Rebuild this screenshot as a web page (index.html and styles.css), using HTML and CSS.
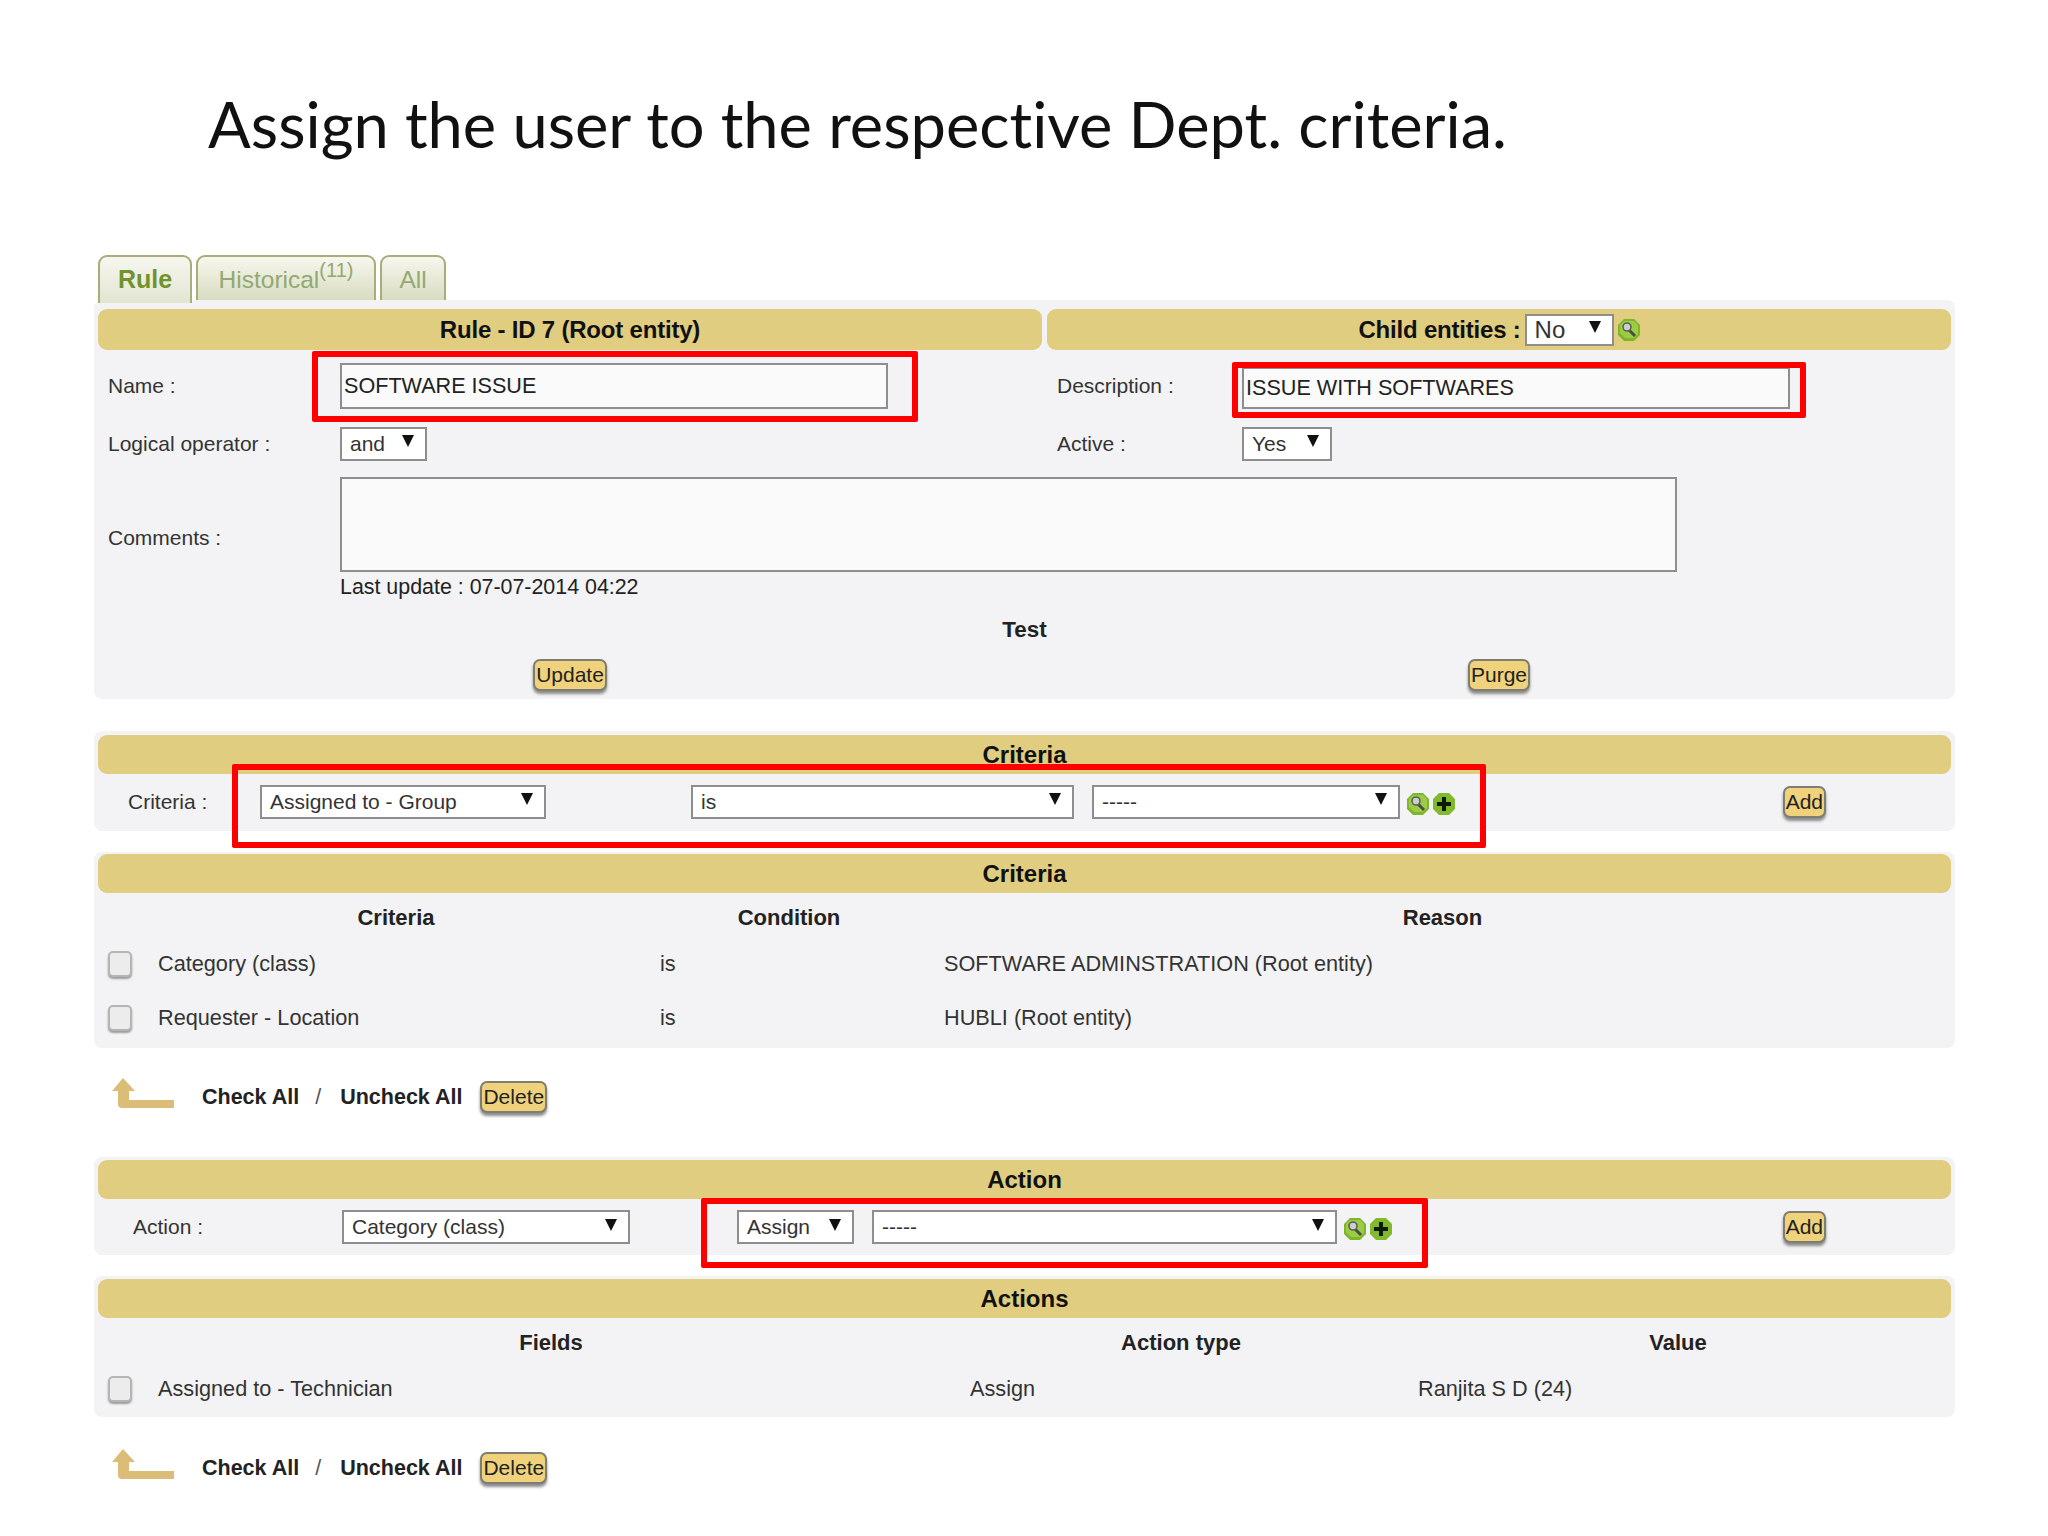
FILE: index.html
```html
<!DOCTYPE html>
<html lang="en">
<head>
    <meta charset="UTF-8">
    <title>Assign the user to the respective Dept. criteria.</title>
    <link rel="stylesheet" href="styles.css">
</head>
<body>
    <svg class="defs" width="0" height="0">
        <symbol id="icon-search" viewBox="0 0 22 24">
            <path d="M6 1h10l6 6v10l-6 6H6l-6-6V7z" fill="#7fb52a"/>
            <path d="M6 3h10l4 4v9l-4 4H7l-5-5V7z" fill="#9ccb45"/>
            <path d="M11 12l6 6" stroke="#4a4f44" stroke-width="3"/>
            <circle cx="9" cy="9" r="4" fill="#c9cfc9" stroke="#5b6058" stroke-width="1.6"/>
        </symbol>
        <symbol id="icon-plus" viewBox="0 0 22 24">
            <path d="M6 1h10l6 6v10l-6 6H6l-6-6V7z" fill="#82b82c"/>
            <path d="M9 5h4v5h5v4h-5v5H9v-5H4v-4h5z" fill="#0d1a08"/>
        </symbol>
        <symbol id="icon-back" viewBox="0 0 62 30">
            <path d="M11 0l12 13h-6v9h45v8H10q-4 0-4-4V13H0z" fill="#dcbd78"/>
        </symbol>
    </svg>

    <div class="slide">
        <h1 class="title">Assign the user to the respective Dept. criteria.</h1>

        <div class="tabs">
            <a class="tab active">Rule</a>
            <a class="tab wide">Historical<sup>(11)</sup></a>
            <a class="tab short">All</a>
        </div>

        <section class="panel rule-panel">
            <div class="split">
                <div class="head">Rule - ID 7 (Root entity)</div>
                <div class="head head-child">
                    <span>Child entities :</span>
                    <div class="select sel-child"><span>No</span></div>
                    <svg class="icon"><use href="#icon-search"/></svg>
                </div>
            </div>
            <div class="form-row first">
                <div class="cell">
                    <label class="label">Name :</label>
                    <input class="text-input" type="text" value="SOFTWARE ISSUE">
                </div>
                <div class="cell cell-right">
                    <label class="label">Description :</label>
                    <input class="text-input short-input" type="text" value="ISSUE WITH SOFTWARES">
                </div>
            </div>
            <div class="form-row second">
                <div class="cell">
                    <label class="label">Logical operator :</label>
                    <div class="select sel-and"><span>and</span></div>
                </div>
                <div class="cell cell-right">
                    <label class="label">Active :</label>
                    <div class="select sel-yes"><span>Yes</span></div>
                </div>
            </div>
            <div class="form-row third">
                <label class="label">Comments :</label>
                <textarea class="comments"></textarea>
            </div>
            <div class="last-update">Last update : 07-07-2014 04:22</div>
            <div class="test">Test</div>
            <div class="split actions-row">
                <div class="centered"><button class="btn">Update</button></div>
                <div class="centered"><button class="btn">Purge</button></div>
            </div>
        </section>

        <section class="panel add-panel criteria-add">
            <div class="head">Criteria</div>
            <div class="add-row">
                <label class="label add-label-criteria">Criteria :</label>
                <div class="select sel-group"><span>Assigned to - Group</span></div>
                <div class="select sel-is"><span>is</span></div>
                <div class="select sel-value"><span>-----</span></div>
                <svg class="icon"><use href="#icon-search"/></svg>
                <svg class="icon"><use href="#icon-plus"/></svg>
                <button class="btn btn-add">Add</button>
            </div>
        </section>

        <section class="panel list-panel criteria-list">
            <div class="head">Criteria</div>
            <div class="table table-criteria">
                <div></div><div class="th">Criteria</div><div class="th">Condition</div><div class="th">Reason</div>
                <div class="td"><input class="check" type="checkbox"></div><div class="td">Category (class)</div><div class="td pad">is</div><div class="td">SOFTWARE ADMINSTRATION (Root entity)</div>
                <div class="td"><input class="check" type="checkbox"></div><div class="td">Requester - Location</div><div class="td pad">is</div><div class="td">HUBLI (Root entity)</div>
            </div>
        </section>

        <div class="bulk">
            <svg class="back"><use href="#icon-back"/></svg>
            <a class="bulk-link">Check All</a>
            <span class="slash">/</span>
            <a class="bulk-link">Uncheck All</a>
            <button class="btn">Delete</button>
        </div>

        <section class="panel add-panel action-add">
            <div class="head">Action</div>
            <div class="add-row">
                <label class="label add-label-action">Action :</label>
                <div class="select sel-category"><span>Category (class)</span></div>
                <div class="select sel-assign"><span>Assign</span></div>
                <div class="select sel-dash"><span>-----</span></div>
                <svg class="icon"><use href="#icon-search"/></svg>
                <svg class="icon"><use href="#icon-plus"/></svg>
                <button class="btn btn-add">Add</button>
            </div>
        </section>

        <section class="panel list-panel actions-list">
            <div class="head">Actions</div>
            <div class="table table-actions">
                <div></div><div class="th">Fields</div><div class="th">Action type</div><div class="th">Value</div>
                <div class="td"><input class="check" type="checkbox"></div><div class="td">Assigned to - Technician</div><div class="td pad">Assign</div><div class="td">Ranjita S D (24)</div>
            </div>
        </section>

        <div class="bulk">
            <svg class="back"><use href="#icon-back"/></svg>
            <a class="bulk-link">Check All</a>
            <span class="slash">/</span>
            <a class="bulk-link">Uncheck All</a>
            <button class="btn">Delete</button>
        </div>

        <!-- red callouts drawn over the screenshot -->
        <div class="mark mark-name"></div>
        <div class="mark mark-desc"></div>
        <div class="mark mark-criteria"></div>
        <div class="mark mark-action"></div>
    </div>
</body>
</html>
```

FILE: styles.css
```css
body {
    margin: 0;
    background: #fff;
    color: #222;
    font-family: "Liberation Sans", Arial, sans-serif;
    font-size: 21px;
}
.defs {
    position: absolute;
}
.slide {
    position: relative;
    width: 2048px;
    height: 1536px;
    padding: 0 93px 0 94px;
    box-sizing: border-box;
    overflow: hidden;
}
.title {
    height: 255px;
    margin: 0;
    padding: 86px 0 0 114px;
    box-sizing: border-box;
    font-family: Lato, "Noto Sans", sans-serif;
    font-size: 63.2px;
    font-weight: 400;
    font-variant-ligatures: none;
    line-height: 76px;
    color: #111;
}

/* tabs */
.tabs {
    display: flex;
    gap: 4px;
    height: 48px;
    margin: 0 0 -3px 4px;
    position: relative;
    z-index: 1;
}
.tab {
    width: 94px;
    height: 45px;
    box-sizing: border-box;
    border: 2px solid #a9ad7c;
    border-bottom: none;
    border-radius: 9px 9px 0 0;
    background: linear-gradient(#f7f7ee, #d8dcc0);
    color: #93a873;
    font-size: 24.5px;
    line-height: 45px;
    text-align: center;
}
.tab.active {
    height: 48px;
    background: linear-gradient(#f7f7ee, #e2e5d2);
    color: #71932c;
    font-weight: bold;
    font-size: 25px;
}
.tab.wide {
    width: 180px;
}
.tab.short {
    width: 66px;
}
.tab sup {
    font-size: 20px;
    line-height: 0;
    position: relative;
    top: -2px;
}

/* panels */
.panel {
    background: #f3f3f5;
    border-radius: 8px;
    padding: 0 4px;
}
.head {
    height: 39px;
    background: #e0cd80;
    border-radius: 9px;
    color: #111;
    font-size: 24px;
    font-weight: bold;
    line-height: 39px;
    text-align: center;
}
.split {
    display: grid;
    grid-template-columns: 944px 904px;
    gap: 5px;
}
.rule-panel {
    padding-top: 9px;
    height: 399px;
    box-sizing: border-box;
}
.rule-panel .head {
    height: 41px;
    line-height: 41px;
    letter-spacing: -0.2px;
}
.head-child {
    display: flex;
    justify-content: center;
    align-items: center;
    gap: 4px;
}
.head-child .select {
    font-weight: normal;
    letter-spacing: 0;
}
.label {
    color: #333;
}
.form-row {
    display: flex;
    align-items: center;
    padding-left: 10px;
}
.form-row .label {
    width: 232px;
    flex: none;
}
.cell {
    display: flex;
    align-items: center;
    flex: none;
    width: 949px;
}
.cell-right {
    width: auto;
}
.cell-right .label {
    width: 185px;
}
.first {
    margin-top: 13px;
    height: 46px;
}
.second {
    margin-top: 18px;
    height: 33px;
}
.third {
    margin-top: 17px;
}
.third .label {
    padding-top: 26px;
}
.text-input {
    width: 548px;
    height: 46px;
    box-sizing: border-box;
    border: 2px solid #8e8e8e;
    background: #fafafa;
    padding: 0 2px;
    font: 21.6px "Liberation Sans", Arial, sans-serif;
    color: #222;
}
.short-input {
    height: 42px;
    margin-top: 4px;
}
.comments {
    display: block;
    width: 1337px;
    height: 95px;
    box-sizing: border-box;
    border: 2px solid #8e8e8e;
    background: #fafafa;
    resize: none;
}
.last-update {
    margin-top: 1px;
    padding-left: 242px;
    font-size: 21.4px;
    line-height: 28px;
}
.test {
    margin-top: 15px;
    font-size: 22.4px;
    font-weight: bold;
    line-height: 28px;
    text-align: center;
}
.actions-row {
    margin-top: 15px;
}
.centered {
    text-align: center;
}

/* selects */
.select {
    display: flex;
    align-items: center;
    justify-content: space-between;
    flex: none;
    height: 34px;
    box-sizing: border-box;
    border: 2px solid #8e8e8e;
    background: #fff;
    padding: 0 11px 0 8px;
    color: #333;
}
.select::after {
    content: "";
    width: 0;
    height: 0;
    margin-bottom: 5px;
    border-left: 6px solid transparent;
    border-right: 6px solid transparent;
    border-top: 12px solid #111;
}
.sel-child { width: 89px; height: 32px; }
.sel-and { width: 87px; }
.sel-yes { width: 90px; }
.sel-group { width: 286px; }
.sel-is { width: 383px; margin-left: 145px; }
.sel-value { width: 308px; margin-left: 18px; }
.sel-category { width: 288px; }
.sel-assign { width: 117px; margin-left: 107px; }
.sel-dash { width: 465px; margin-left: 18px; }

.icon {
    width: 22px;
    height: 24px;
    flex: none;
}
.add-row .icon {
    margin: 4px 0 0 4px;
}
.add-row .select + .icon {
    margin-left: 7px;
}

/* buttons */
.btn {
    height: 32px;
    padding: 0 1px;
    border: 2px solid #7d7d72;
    border-radius: 7px;
    background: #f1d27c;
    box-shadow: 0 3px 3px #8b8b8b;
    color: #222;
    font: 21px "Liberation Sans", Arial, sans-serif;
    line-height: 26px;
}

/* add rows */
.add-panel {
    padding-top: 3px;
}
.add-row {
    display: flex;
    align-items: center;
}
.btn-add {
    margin: 0 125px 0 auto;
}
.criteria-add {
    margin-top: 32px;
    padding-top: 4px;
}
.criteria-add .add-row {
    height: 57px;
    padding: 10px 0 12px 30px;
    box-sizing: border-box;
}
.add-label-criteria {
    width: 132px;
}
.action-add {
    margin-top: 40px;
}
.action-add .add-row {
    height: 56px;
    padding: 11px 0 11px 35px;
    box-sizing: border-box;
}
.add-label-action {
    width: 209px;
}

/* tables */
.list-panel {
    padding-top: 2px;
}
.table {
    display: grid;
    color: #333;
    font-size: 21.7px;
}
.table-criteria {
    grid-template-columns: 60px 476px 310px 997px;
    padding-bottom: 3px;
}
.table-actions {
    grid-template-columns: 60px 786px 474px 520px;
    padding-bottom: 1px;
}
.th {
    height: 38px;
    margin-top: 6px;
    font-size: 22px;
    font-weight: bold;
    line-height: 38px;
    text-align: center;
    color: #222;
}
.td {
    display: flex;
    align-items: center;
    height: 54px;
}
.pad {
    padding-left: 26px;
}
.check {
    appearance: none;
    width: 24px;
    height: 26px;
    margin: 0 0 0 10px;
    border: 2px solid #b5b5b5;
    border-radius: 5px;
    background: #ececec;
    box-shadow: 0 2px 2px #9a9a9a;
}
.criteria-list {
    margin-top: 21px;
}
.actions-list {
    margin-top: 21px;
    padding-top: 3px;
}

/* check all row */
.bulk {
    display: flex;
    align-items: center;
    height: 40px;
    margin-top: 29px;
    padding-left: 18px;
    font-size: 21.5px;
    color: #222;
}
.actions-list + .bulk {
    margin-top: 31px;
}
.back {
    width: 62px;
    height: 30px;
    margin: 0 28px 8px 0;
    flex: none;
}
.bulk-link {
    font-weight: bold;
}
.slash {
    margin: 0 19px 0 16px;
    color: #555;
}
.bulk .btn {
    margin-left: 18px;
}

/* red callouts */
.mark {
    position: absolute;
    box-sizing: border-box;
    border: 6px solid #f00;
    border-radius: 2px;
}
.mark-name { left: 312px; top: 351px; width: 606px; height: 71px; }
.mark-desc { left: 1232px; top: 362px; width: 574px; height: 56px; }
.mark-criteria { left: 232px; top: 764px; width: 1254px; height: 84px; }
.mark-action { left: 701px; top: 1198px; width: 727px; height: 70px; }
```
